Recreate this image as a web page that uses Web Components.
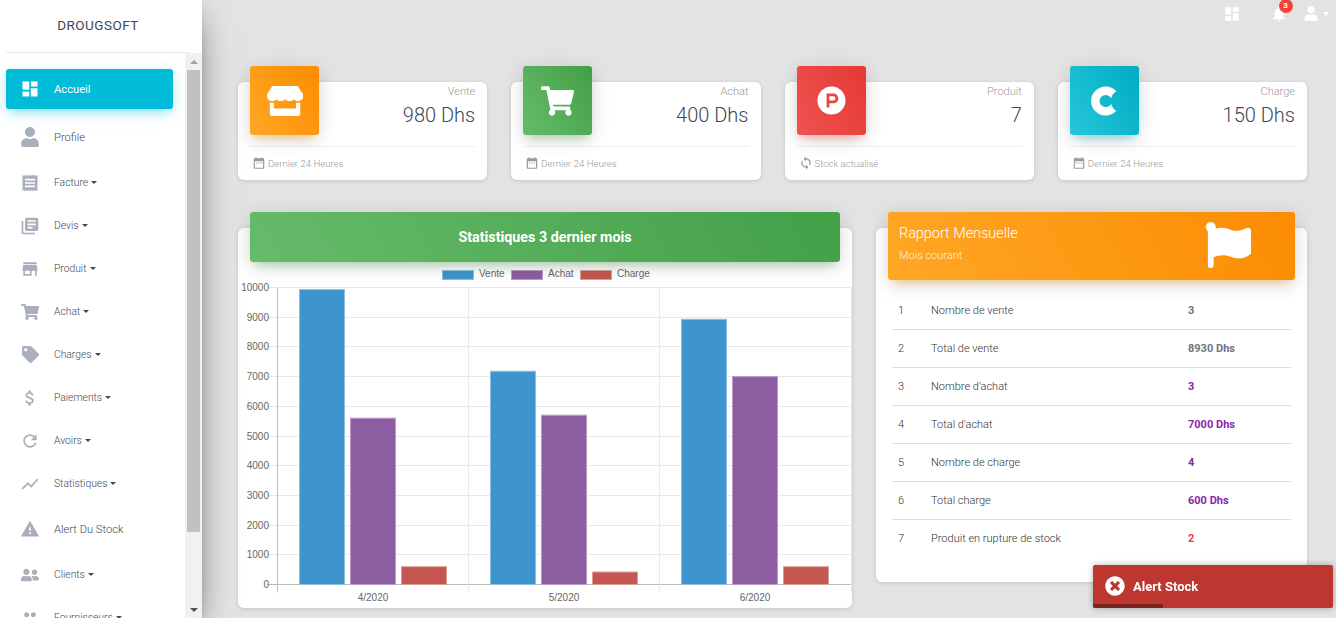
<!DOCTYPE html>
<html lang="fr">
<head>
<meta charset="utf-8">
<title>Drougsoft</title>
<style>
    html, body { margin: 0; height: 100%; overflow: hidden; }
    body { background: #e3e3e3; font-family: Roboto, "Liberation Sans", sans-serif; color: #3c4858; }
    .layout { display: flex; height: 618px; }
</style>
</head>
<body>
<div class="layout">
    <side-bar></side-bar>
    <main-panel>
        <top-bar></top-bar>
        <stat-row>
            <stat-card label="Vente" value="980 Dhs" color="orange" icon="store" foot="Dernier 24 Heures"></stat-card>
            <stat-card label="Achat" value="400 Dhs" color="green" icon="cart" foot="Dernier 24 Heures"></stat-card>
            <stat-card label="Produit" value="7" color="red" icon="product" foot="Stock actualisé" footicon="cached"></stat-card>
            <stat-card label="Charge" value="150 Dhs" color="cyan" icon="cuttlefish" foot="Dernier 24 Heures"></stat-card>
        </stat-row>
        <chart-row>
            <chart-card></chart-card>
            <report-card></report-card>
        </chart-row>
    </main-panel>
</div>
<alert-toast></alert-toast>

<script>
// Les icônes utilisées dans toute la page
const ICONS = {
    dashboard: ['0 0 24 24', 'M3 13h8V3H3v10zm0 8h8v-6H3v6zm10 0h8V11h-8v10zm0-18v6h8V3h-8z'],
    user: ['0 0 448 512', 'M224 256c70.7 0 128-57.3 128-128S294.7 0 224 0 96 57.3 96 128s57.3 128 128 128zm89.6 32h-16.7c-22.2 10.2-46.9 16-72.9 16s-50.6-5.8-72.9-16h-16.7C60.2 288 0 348.2 0 422.4V464c0 26.5 21.5 48 48 48h352c26.5 0 48-21.5 48-48v-41.6c0-74.2-60.2-134.4-134.4-134.4z'],
    receipt: ['0 0 24 24', 'M18 17H6v-2h12v2zm0-4H6v-2h12v2zm0-4H6V7h12v2zM3 22l1.5-1.5L6 22l1.5-1.5L9 22l1.5-1.5L12 22l1.5-1.5L15 22l1.5-1.5L18 22l1.5-1.5L21 22V2l-1.5 1.5L18 2l-1.5 1.5L15 2l-1.5 1.5L12 2l-1.5 1.5L9 2 7.5 3.5 6 2 4.5 3.5 3 2v20z'],
    books: ['0 0 24 24', 'M4 6H2v14c0 1.1.9 2 2 2h14v-2H4V6zm16-4H8c-1.1 0-2 .9-2 2v12c0 1.1.9 2 2 2h12c1.1 0 2-.9 2-2V4c0-1.1-.9-2-2-2zm-1 9H9V9h10v2zm-4 4H9v-2h6v2zm4-8H9V5h10v2z'],
    shop: ['0 0 24 24', 'M20 4H4v2h16V4zm1 10v-2l-1-5H4l-1 5v2h1v6h10v-6h4v6h2v-6h1zm-9 4H6v-4h6v4z'],
    cart: ['0 0 576 512', 'M528.12 301.319l47.273-208C578.806 78.301 567.391 64 551.99 64H159.208l-9.166-44.81C147.758 8.021 137.93 0 126.529 0H24C10.745 0 0 10.745 0 24v16c0 13.255 10.745 24 24 24h69.883l70.248 343.435C147.325 417.1 136 435.222 136 456c0 30.928 25.072 56 56 56s56-25.072 56-56c0-15.674-6.447-29.835-16.824-40h209.647C430.447 426.165 424 440.326 424 456c0 30.928 25.072 56 56 56s56-25.072 56-56c0-22.172-12.888-41.332-31.579-50.405l5.517-24.276c3.413-15.018-8.002-29.319-23.403-29.319H218.117l-6.545-32h293.145c11.206 0 20.92-7.754 23.403-18.681z'],
    tag: ['0 0 512 512', 'M0 252.118V48C0 21.49 21.49 0 48 0h204.118a48 48 0 0 1 33.941 14.059l211.882 211.882c18.745 18.745 18.745 49.137 0 67.882L293.823 497.941c-18.745 18.745-49.137 18.745-67.882 0L14.059 286.059A48 48 0 0 1 0 252.118zM112 64c-26.51 0-48 21.49-48 48s21.49 48 48 48 48-21.49 48-48-21.49-48-48-48z'],
    dollar: ['0 0 24 24', 'M11.8 10.9c-2.27-.59-3-1.2-3-2.15 0-1.09 1.01-1.85 2.7-1.85 1.78 0 2.44.85 2.5 2.1h2.21c-.07-1.72-1.12-3.3-3.21-3.81V3h-3v2.16c-1.94.42-3.5 1.68-3.5 3.61 0 2.31 1.91 3.46 4.7 4.13 2.5.6 3 1.48 3 2.41 0 .69-.49 1.79-2.7 1.79-2.06 0-2.87-.92-2.98-2.1h-2.2c.12 2.19 1.76 3.42 3.68 3.83V21h3v-2.15c1.95-.37 3.5-1.5 3.5-3.55 0-2.84-2.43-3.81-4.7-4.4z'],
    refresh: ['0 0 24 24', 'M17.65 6.35C16.2 4.9 14.21 4 12 4c-4.42 0-7.99 3.58-7.99 8s3.57 8 7.99 8c3.73 0 6.84-2.55 7.73-6h-2.08c-.82 2.33-3.04 4-5.65 4-3.31 0-6-2.69-6-6s2.69-6 6-6c1.66 0 3.14.69 4.22 1.78L13 11h7V4l-2.35 2.35z'],
    chart: ['0 0 24 24', 'M3.5 18.49l6-6.01 4 4L22 6.92l-1.41-1.41-7.09 7.97-4-4L2 16.99z'],
    warning: ['0 0 24 24', 'M1 21h22L12 2 1 21zm12-3h-2v-2h2v2zm0-4h-2v-4h2v4z'],
    people: ['0 0 24 24', 'M16 11c1.66 0 2.99-1.34 2.99-3S17.66 5 16 5c-1.66 0-3 1.34-3 3s1.34 3 3 3zm-8 0c1.66 0 2.99-1.34 2.99-3S9.66 5 8 5C6.34 5 5 6.34 5 8s1.34 3 3 3zm0 2c-2.33 0-7 1.17-7 3.5V19h14v-2.5c0-2.33-4.67-3.5-7-3.5zm8 0c-.29 0-.62.02-.97.05 1.16.84 1.97 1.97 1.97 3.45V19h6v-2.5c0-2.33-4.67-3.5-7-3.5z'],
    friends: ['0 0 640 512', 'M192 256c61.9 0 112-50.1 112-112S253.9 32 192 32 80 82.1 80 144s50.1 112 112 112zm76.8 32h-8.3c-20.8 10-43.9 16-68.5 16s-47.6-6-68.5-16h-8.3C51.6 288 0 339.6 0 403.2V432c0 26.5 21.5 48 48 48h288c26.5 0 48-21.5 48-48v-28.8c0-63.6-51.6-115.2-115.2-115.2zM480 256c53 0 96-43 96-96s-43-96-96-96-96 43-96 96 43 96 96 96zm48 32h-3.8c-13.9 4.8-28.6 8-44.2 8s-30.3-3.2-44.2-8H432c-20.4 0-39.2 5.9-55.7 15.4 24.4 26.3 39.7 61.2 39.7 99.8v38.4c0 2.2-.5 4.3-.6 6.4H592c26.5 0 48-21.5 48-48 0-61.9-50.1-112-112-112z'],
    bell: ['0 0 24 24', 'M12 22c1.1 0 2-.9 2-2h-4c0 1.1.89 2 2 2zm6-6v-5c0-3.07-1.64-5.64-4.5-6.32V4c0-.83-.67-1.5-1.5-1.5s-1.5.67-1.5 1.5v.68C7.63 5.36 6 7.92 6 11v5l-2 2v1h16v-1l-2-2z'],
    store: ['0 0 616 512', 'M602 118.6L537.1 15C531.3 5.7 521 0 510 0H106C95 0 84.7 5.7 78.9 15L14 118.6c-33.9 54.1-3.9 129.3 59.4 137.9 4.6.6 9.2.9 13.7.9 29.9 0 56.4-13.1 74.6-33.4 18.2 20.3 44.8 33.4 74.6 33.4 29.9 0 56.4-13.1 74.6-33.4 18.2 20.3 44.8 33.4 74.6 33.4 29.9 0 56.4-13.1 74.6-33.4 18.2 20.3 44.8 33.4 74.6 33.4 4.6 0 9.2-.3 13.7-.9 63.5-8.5 93.6-83.8 59.6-137.9zM530.4 288c-11 0-21.9-1.6-32.4-4.2V384H118v-100.2c-10.5 2.6-21.4 4.2-32.4 4.2-6.4 0-12.9-.4-19.3-1.3-6-.8-11.9-2.2-17.6-3.8V480c0 17.7 14.3 32 32 32h456c17.7 0 32-14.3 32-32V283c-5.7 1.6-11.6 3-17.6 3.8-6.6.9-13 1.2-19.3 1.2z'],
    product: ['0 0 512 512', 'M326.3 218.8c0 20.5-16.7 37.2-37.2 37.2h-70.3v-74.4h70.3c20.5 0 37.2 16.7 37.2 37.2zM504 256c0 137-111 248-248 248S8 393 8 256 119 8 256 8s248 111 248 248zm-128.1-37.2c0-47.9-38.9-86.8-86.8-86.8H169.2v248h49.6v-74.4h70.3c47.9 0 86.8-38.9 86.8-86.8z'],
    cuttlefish: ['0 0 440 512', 'M344 305.5c-17.5 31.6-57.4 54.5-96 54.5-56.6 0-104-47.4-104-104s47.4-104 104-104c38.6 0 78.5 22.9 96 54.5 13.7-50.9 41.7-93.3 87-117.8C385.7 39.1 320.5 8 248 8 111 8 0 119 0 256s111 248 248 248c72.5 0 137.7-31.1 183-80.7-45.3-24.5-73.3-66.9-87-117.8z'],
    calendar: ['0 0 24 24', 'M9 11H7v2h2v-2zm4 0h-2v2h2v-2zm4 0h-2v2h2v-2zm2-7h-1V2h-2v2H8V2H6v2H5c-1.11 0-1.99.9-1.99 2L3 20c0 1.1.89 2 2 2h14c1.1 0 2-.9 2-2V6c0-1.1-.9-2-2-2zm0 16H5V9h14v11z'],
    cached: ['0 0 24 24', 'M12 4V1L8 5l4 4V6c3.31 0 6 2.69 6 6 0 1.01-.25 1.97-.7 2.8l1.46 1.46C19.54 15.03 20 13.57 20 12c0-4.42-3.58-8-8-8zm0 14c-3.31 0-6-2.69-6-6 0-1.01.25-1.97.7-2.8L5.24 7.74C4.46 8.97 4 10.43 4 12c0 4.42 3.58 8 8 8v3l4-4-4-4v3z'],
    flag: ['0 0 512 512', 'M349.565 98.783C295.978 98.783 251.721 64 184.348 64c-24.955 0-47.309 4.384-68.045 12.013a55.947 55.947 0 0 0 3.586-23.562C118.117 24.015 94.806 1.206 66.338.048 34.345-1.254 8 24.296 8 56c0 19.026 9.497 35.825 24 45.945V488c0 13.255 10.745 24 24 24h16c13.255 0 24-10.745 24-24v-94.4c28.311-12.064 63.582-22.122 114.435-22.122 53.588 0 97.844 34.783 165.217 34.783 48.169 0 86.667-16.294 122.505-40.858C506.84 359.452 512 349.571 512 339.045v-243.1c0-23.393-24.269-38.87-45.485-29.016-34.338 15.948-76.454 31.854-116.95 31.854z'],
    timesCircle: ['0 0 512 512', 'M256 8C119 8 8 119 8 256s111 248 248 248 248-111 248-248S393 8 256 8zm121.6 313.1c4.7 4.7 4.7 12.3 0 17L338 377.6c-4.7 4.7-12.3 4.7-17 0L256 312l-65.1 65.6c-4.7 4.7-12.3 4.7-17 0L134.4 338c-4.7-4.7-4.7-12.3 0-17l65.6-65-65.6-65.1c-4.7-4.7-4.7-12.3 0-17l39.6-39.6c4.7-4.7 12.3-4.7 17 0l65 65.7 65.1-65.6c4.7-4.7 12.3-4.7 17 0l39.6 39.6c4.7 4.7 4.7 12.3 0 17L312 256l65.6 65.1z']
};

function svgIcon(name, width, height) {
    const [box, d] = ICONS[name];
    return `<svg width="${width}" height="${height}" viewBox="${box}" fill="currentColor"><path fill-rule="evenodd" d="${d}"/></svg>`;
}

class NavItem extends HTMLElement {
    constructor() {
        super();
        this.shadow = this.attachShadow({mode: 'open'});
    }

    connectedCallback() {
        const drop = this.hasAttribute('drop');
        const active = this.hasAttribute('active');
        const size = this.getAttribute('size') || '24';
        this.shadow.innerHTML = `
        <style>
            :host {
                display: flex;
                align-items: center;
                height: ${drop ? 43 : 48}px;
                padding-left: 6px;
            }
            .link {
                display: flex;
                align-items: center;
                height: ${drop ? 43 : 40}px;
                width: 167px;
                border-radius: 3px;
                color: #3c4858;
                font-weight: 300;
                font-size: ${drop ? 10.3 : 11.2}px;
            }
            .active {
                background: #00bcd9;
                color: #fff;
                font-weight: 400;
                box-shadow: 0 4px 16px rgba(0, 188, 212, .25), 0 6px 10px -5px rgba(0, 188, 212, .4);
            }
            .ic {
                display: flex;
                align-items: center;
                justify-content: center;
                width: 48px;
                flex: none;
                color: #a9afbb;
            }
            .active .ic { color: #fff; }
            .caret {
                display: inline-block;
                margin-left: 3px;
                vertical-align: 2.5px;
                border-top: 3.5px solid #3c4858;
                border-left: 3.5px solid transparent;
                border-right: 3.5px solid transparent;
            }
        </style>
        <div class="link ${active ? 'active' : ''}">
            <span class="ic">${svgIcon(this.getAttribute('icon'), size, size)}</span>
            <span><slot></slot>${drop ? '<i class="caret"></i>' : ''}</span>
        </div>`;
    }
}
customElements.define('nav-item', NavItem);

class SideBar extends HTMLElement {
    constructor() {
        super();
        this.shadow = this.attachShadow({mode: 'open'});
    }

    connectedCallback() {
        const items = [
            ['dashboard', 'Accueil', 'active', 20],
            ['user', 'Profile', '', 20],
            ['receipt', 'Facture', 'drop', 20],
            ['books', 'Devis', 'drop', 20],
            ['shop', 'Produit', 'drop', 20],
            ['cart', 'Achat', 'drop', 18],
            ['tag', 'Charges', 'drop', 17],
            ['dollar', 'Paiements', 'drop', 20],
            ['refresh', 'Avoirs', 'drop', 20],
            ['chart', 'Statistiques', 'drop', 20],
            ['warning', 'Alert Du Stock', '', 20],
            ['friends', 'Clients', 'drop', 18],
            ['people', 'Fournisseurs', 'drop', 20]
        ];
        const rows = items.map(([icon, text, flag, size]) =>
            `<nav-item icon="${icon}" size="${size}" ${flag}>${text}</nav-item>`).join('');
        this.shadow.innerHTML = `
        <style>
            :host {
                display: flex;
                flex-direction: column;
                flex: none;
                width: 202px;
                height: 618px;
                background: #fff;
                position: relative;
                z-index: 2;
                box-shadow: 0 16px 38px -12px rgba(0, 0, 0, .56), 0 4px 25px 0 rgba(0, 0, 0, .12), 0 8px 10px -5px rgba(0, 0, 0, .2);
            }
            .logo {
                height: 53px;
                box-sizing: border-box;
                margin: 0 12px 0 6px;
                padding-top: 17px;
                text-align: center;
                font-size: 13.5px;
                letter-spacing: .45px;
                color: #3c4858;
                font-weight: 400;
                border-bottom: 1px solid #e8e8e8;
            }
            .body { display: flex; flex: 1; min-height: 0; }
            nav {
                flex: 1;
                overflow: hidden;
                padding-top: 12px;
            }
            .scroll {
                display: flex;
                flex-direction: column;
                align-items: center;
                flex: none;
                width: 17px;
                background: #f1f1f1;
            }
            .up, .down {
                height: 17px;
                flex: none;
                display: flex;
                align-items: center;
                justify-content: center;
            }
            .up i { border-bottom: 4px solid #a3a3a3; border-left: 4px solid transparent; border-right: 4px solid transparent; }
            .down i { border-top: 4px solid #505050; border-left: 4px solid transparent; border-right: 4px solid transparent; }
            .thumb { width: 13px; height: 462px; flex: none; background: #c1c1c1; }
            .space { flex: 1; }
        </style>
        <div class="logo">DROUGSOFT</div>
        <div class="body">
            <nav>${rows}</nav>
            <div class="scroll">
                <div class="up"><i></i></div>
                <div class="thumb"></div>
                <div class="space"></div>
                <div class="down"><i></i></div>
            </div>
        </div>`;
    }
}
customElements.define('side-bar', SideBar);

class MainPanel extends HTMLElement {
    constructor() {
        super();
        this.attachShadow({mode: 'open'}).innerHTML = `
        <style>
            :host {
                display: block;
                flex: 1;
                min-width: 0;
                padding: 0 29px 0 36px;
            }
        </style>
        <slot></slot>`;
    }
}
customElements.define('main-panel', MainPanel);

class TopBar extends HTMLElement {
    constructor() {
        super();
        this.shadow = this.attachShadow({mode: 'open'});
    }

    connectedCallback() {
        this.shadow.innerHTML = `
        <style>
            :host {
                display: flex;
                justify-content: flex-end;
                align-items: center;
                height: 27px;
                margin-right: -22px;
                color: #fff;
            }
            .bell { position: relative; display: flex; margin: 0 16px 0 29px; }
            .badge {
                position: absolute;
                top: -5.5px;
                right: -4.5px;
                width: 14px;
                height: 14px;
                border-radius: 50%;
                background: #f44336;
                color: #fff;
                font-size: 8px;
                font-weight: 700;
                line-height: 14px;
                text-align: center;
            }
            .caret {
                margin-left: 5px;
                border-top: 4px solid #fff;
                border-left: 3.5px solid transparent;
                border-right: 3.5px solid transparent;
            }
            span { display: flex; }
        </style>
        <span>${svgIcon('dashboard', 18, 18)}</span>
        <span class="bell">${svgIcon('bell', 18, 18)}<b class="badge">3</b></span>
        <span>${svgIcon('user', 14, 15)}</span>
        <i class="caret"></i>`;
    }
}
customElements.define('top-bar', TopBar);

class StatRow extends HTMLElement {
    constructor() {
        super();
        this.attachShadow({mode: 'open'}).innerHTML = `
        <style>
            :host {
                display: grid;
                grid-template-columns: repeat(4, 1fr);
                gap: 24px;
                margin-top: 55px;
            }
        </style>
        <slot></slot>`;
    }
}
customElements.define('stat-row', StatRow);

const GRADIENTS = {
    orange: ['#ffa726', '#fb8c00', 'rgba(255, 152, 0, .4)'],
    green: ['#66bb6a', '#43a047', 'rgba(76, 175, 80, .4)'],
    red: ['#ef5350', '#e53935', 'rgba(244, 67, 54, .4)'],
    cyan: ['#26c6da', '#00acc1', 'rgba(0, 172, 193, .4)']
};

class StatCard extends HTMLElement {
    constructor() {
        super();
        this.shadow = this.attachShadow({mode: 'open'});
    }

    connectedCallback() {
        const [from, to, glow] = GRADIENTS[this.getAttribute('color')];
        const sizes = {store: [36, 30], cart: [33, 30], product: [29, 29], cuttlefish: [26, 30]};
        const icon = this.getAttribute('icon');
        const footIcon = this.getAttribute('footicon') || 'calendar';
        this.shadow.innerHTML = `
        <style>
            :host {
                display: block;
                height: 98px;
                box-sizing: border-box;
                padding: 0 12px;
                background: #fff;
                border-radius: 6px;
                box-shadow: 0 1px 4px rgba(0, 0, 0, .14);
            }
            .top { display: flex; justify-content: space-between; height: 64px; }
            .box {
                display: flex;
                align-items: center;
                justify-content: center;
                width: 69px;
                height: 69px;
                margin-top: -16px;
                border-radius: 3px;
                color: #fff;
                background: linear-gradient(60deg, ${from}, ${to});
                box-shadow: 0 4px 20px rgba(0, 0, 0, .14), 0 7px 10px -5px ${glow};
            }
            .text { text-align: right; }
            .label { font-size: 11px; font-weight: 300; color: #999; margin-top: 3px; line-height: 13px; }
            .value { font-size: 20px; font-weight: 300; color: #3c4858; margin-top: 5px; line-height: 25px; }
            .foot {
                display: flex;
                align-items: center;
                gap: 2px;
                height: 32px;
                border-top: 1px solid #eee;
                color: #999;
                font-size: 9.6px;
                font-weight: 300;
            }
            .foot svg { flex: none; margin-left: 2px; }
        </style>
        <div class="top">
            <div class="box">${svgIcon(icon, sizes[icon][0], sizes[icon][1])}</div>
            <div class="text">
                <div class="label">${this.getAttribute('label')}</div>
                <div class="value">${this.getAttribute('value')}</div>
            </div>
        </div>
        <div class="foot">${svgIcon(footIcon, 14, 14)}<span>${this.getAttribute('foot')}</span></div>`;
    }
}
customElements.define('stat-card', StatCard);

class ChartRow extends HTMLElement {
    constructor() {
        super();
        this.attachShadow({mode: 'open'}).innerHTML = `
        <style>
            :host {
                display: grid;
                grid-template-columns: 614px 431px;
                gap: 24px;
                align-items: start;
                margin-top: 48px;
            }
        </style>
        <slot></slot>`;
    }
}
customElements.define('chart-row', ChartRow);

class ChartCard extends HTMLElement {
    constructor() {
        super();
        this.shadow = this.attachShadow({mode: 'open'});
    }

    // Gráfica dibujada a mano, coordenadas relativas a la tarjeta
    drawChart() {
        const left = 39, right = 613, top = 23.5, bottom = 320.5, barW = 45;
        const series = [
            {label: 'Vente', fill: '#3e95cd', line: '#8ebfe0', values: [9930, 7180, 8930]},
            {label: 'Achat', fill: '#8e5ea2', line: '#bb9ac8', values: [5600, 5700, 7000]},
            {label: 'Charge', fill: '#c45850', line: '#dd9e99', values: [600, 420, 600]}
        ];
        const months = ['4/2020', '5/2020', '6/2020'];
        const groupW = (right - left) / 3;
        const perUnit = (bottom - top) / 10000;
        let out = '';

        for (let i = 0; i <= 10; i++) {
            const y = Math.round(bottom - i * 1000 * perUnit - .5) + .5;
            const color = i === 0 ? '#bdbdbd' : '#e9e9e9';
            out += `<line x1="${left - 10}" x2="${right}" y1="${y}" y2="${y}" stroke="${color}"/>`;
            out += `<text x="31" y="${y + 3}" text-anchor="end">${i * 1000}</text>`;
        }
        for (let i = 0; i <= 3; i++) {
            const x = Math.floor(left + i * groupW) + .5;
            const color = i === 0 ? '#bdbdbd' : '#e9e9e9';
            out += `<line x1="${x}" x2="${x}" y1="${top}" y2="${bottom + 8}" stroke="${color}"/>`;
        }
        months.forEach((m, g) => {
            const start = Math.floor(left + g * groupW) + 22;
            out += `<text x="${start + 74}" y="${bottom + 16.5}" text-anchor="middle">${m}</text>`;
            series.forEach((s, k) => {
                const x = start + k * 51 + .5;
                const h = s.values[g] * perUnit;
                out += `<rect x="${x}" y="${bottom - h}" width="${barW}" height="${h}" fill="${s.fill}" stroke="${s.line}" stroke-width="1"/>`;
            });
        });

        let legendX = 204;
        series.forEach((s, k) => {
            out += `<rect x="${legendX + .5}" y="6.5" width="31" height="9" fill="${s.fill}" stroke="${s.line}"/>`;
            out += `<text x="${legendX + 37}" y="12.5">${s.label}</text>`;
            legendX += 69;
        });
        return out;
    }

    connectedCallback() {
        this.shadow.innerHTML = `
        <style>
            :host {
                display: block;
                height: 380px;
                background: #fff;
                border-radius: 6px;
                box-shadow: 0 1px 4px rgba(0, 0, 0, .14);
            }
            .head {
                position: relative;
                top: -16px;
                height: 50px;
                margin: 0 12px -16px;
                display: flex;
                align-items: center;
                justify-content: center;
                border-radius: 3px;
                background: linear-gradient(60deg, #66bb6a, #43a047);
                color: #fff;
                font-size: 14.3px;
                font-weight: 700;
                box-shadow: 0 4px 20px rgba(0, 0, 0, .14), 0 7px 10px -5px rgba(76, 175, 80, .4);
            }
            svg { display: block; margin-top: 2px; }
            text { font: 10px "Liberation Sans", Arial, sans-serif; fill: #666; }
        </style>
        <div class="head">Statistiques 3 dernier mois</div>
        <svg width="614" height="344" viewBox="0 0 614 344">${this.drawChart()}</svg>`;
    }
}
customElements.define('chart-card', ChartCard);

class ReportCard extends HTMLElement {
    constructor() {
        super();
        this.shadow = this.attachShadow({mode: 'open'});
    }

    connectedCallback() {
        const rows = [
            ['Nombre de vente', '3', 'gray'],
            ['Total de vente', '8930 Dhs', 'gray'],
            ["Nombre d'achat", '3', 'purple'],
            ["Total d'achat", '7000 Dhs', 'purple'],
            ['Nombre de charge', '4', 'purple'],
            ['Total charge', '600 Dhs', 'purple'],
            ['Produit en rupture de stock', '2', 'red']
        ];
        const body = rows.map(([name, value, tone], i) => `
            <tr><td>${i + 1}</td><td>${name}</td><td class="${tone}">${value}</td></tr>`).join('');
        this.shadow.innerHTML = `
        <style>
            :host {
                display: block;
                height: 354px;
                background: #fff;
                border-radius: 6px;
                box-shadow: 0 1px 4px rgba(0, 0, 0, .14);
            }
            .head {
                position: relative;
                top: -16px;
                display: flex;
                justify-content: space-between;
                box-sizing: border-box;
                height: 68px;
                margin: 0 12px -16px;
                padding: 13px 44px 0 11px;
                border-radius: 3px;
                background: linear-gradient(60deg, #ffa726, #fb8c00);
                color: #fff;
                box-shadow: 0 4px 20px rgba(0, 0, 0, .14), 0 7px 10px -5px rgba(255, 152, 0, .4);
            }
            h4 { margin: 0; font-size: 14.4px; font-weight: 300; line-height: 18px; }
            p { margin: 6px 0 0; font-size: 11px; font-weight: 300; line-height: 14px; color: rgba(255, 255, 255, .9); }
            .head svg { margin-top: -3px; }
            table {
                border-collapse: collapse;
                width: 399px;
                margin: 12px 0 0 16px;
                font-size: 11px;
                font-weight: 300;
                color: #333;
            }
            td { height: 37px; padding: 0; border-bottom: 1px solid #ddd; }
            tr:last-child td { border-bottom: 0; }
            td:first-child { width: 39px; padding-left: 6px; box-sizing: border-box; }
            td:last-child { width: 103px; font-weight: 700; }
            .gray { color: #6c757d; }
            .purple { color: #8e24aa; }
            .red { color: #f4364c; }
        </style>
        <div class="head">
            <div>
                <h4>Rapport Mensuelle</h4>
                <p>Mois courant</p>
            </div>
            ${svgIcon('flag', 46, 46)}
        </div>
        <table>${body}</table>`;
    }
}
customElements.define('report-card', ReportCard);

class AlertToast extends HTMLElement {
    constructor() {
        super();
        this.shadow = this.attachShadow({mode: 'open'});
    }

    connectedCallback() {
        this.shadow.innerHTML = `
        <style>
            :host {
                position: fixed;
                left: 1093px;
                top: 565px;
                z-index: 5;
                display: flex;
                align-items: center;
                gap: 8px;
                width: 240px;
                height: 43px;
                box-sizing: border-box;
                padding: 0 0 1px 12px;
                border-radius: 2px;
                overflow: hidden;
                background: #bd362f;
                color: #fff;
                font-size: 13px;
                font-weight: 700;
                box-shadow: 0 0 6px rgba(0, 0, 0, .3);
            }
            svg { flex: none; }
            .bar { position: absolute; left: 0; bottom: 0; width: 70px; height: 4px; background: #7a241f; }
        </style>
        ${svgIcon('timesCircle', 20, 20)}
        <span>Alert Stock</span>
        <div class="bar"></div>`;
    }
}
customElements.define('alert-toast', AlertToast);
</script>
</body>
</html>
